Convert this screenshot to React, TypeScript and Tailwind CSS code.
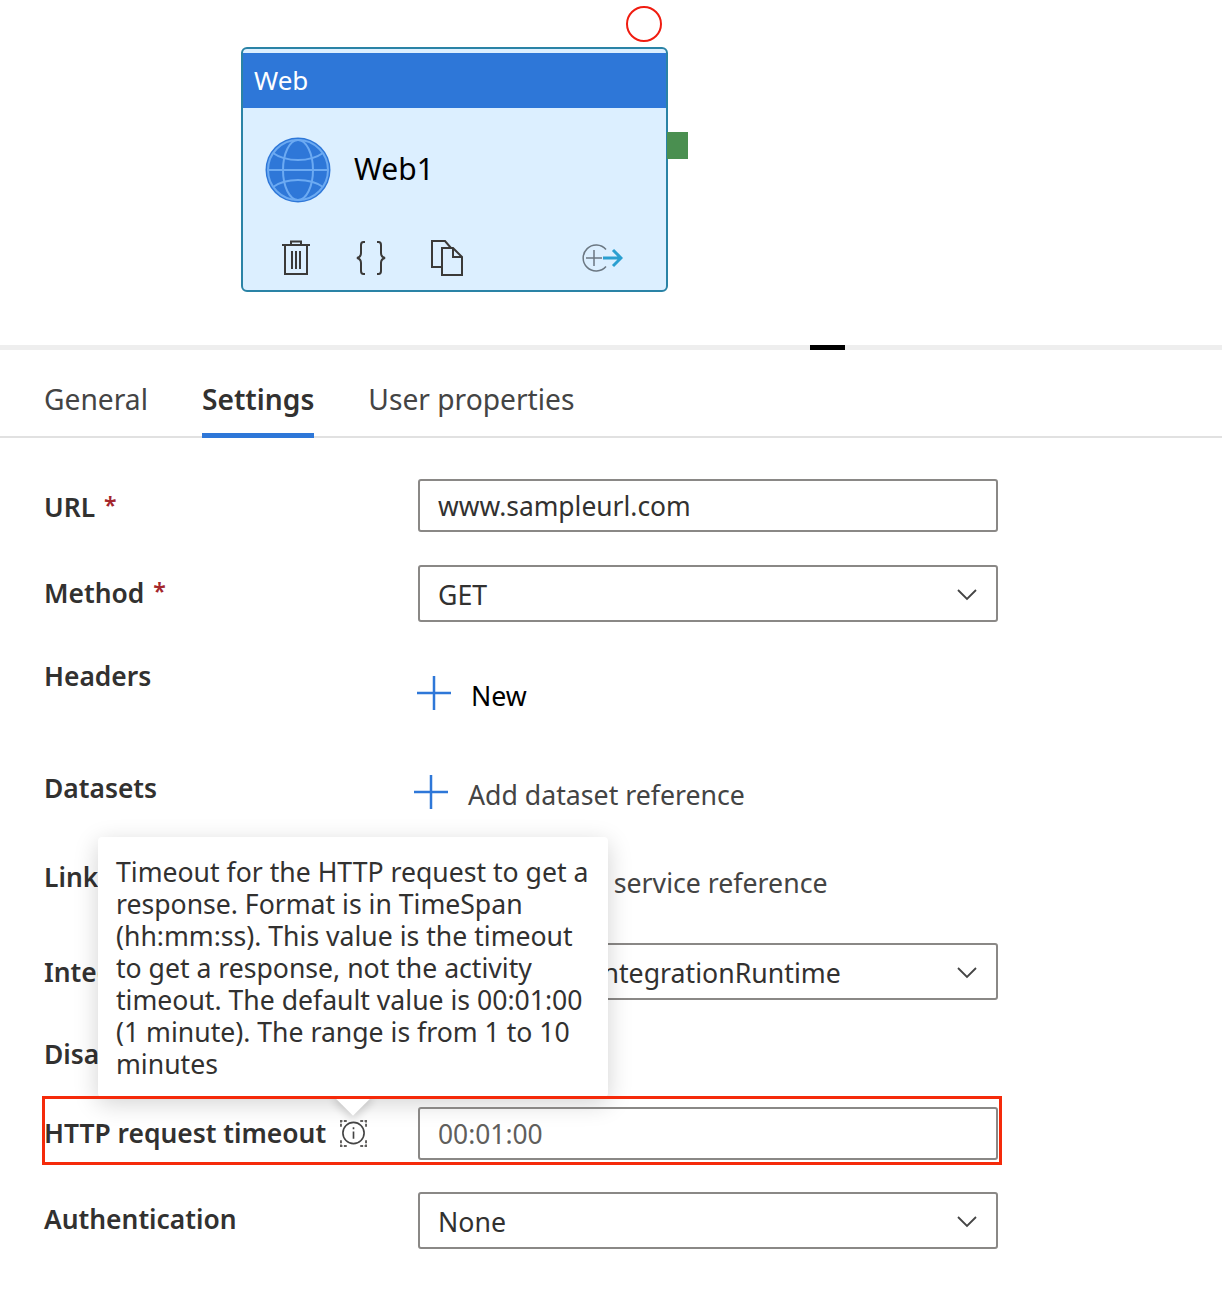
import React from 'react';

const font = { fontFamily: '"Noto Sans", "Open Sans", sans-serif' };

function GlobeIcon() {
  return (
    <svg width="68" height="68" viewBox="0 0 68 68" fill="none">
      <circle cx="34" cy="34" r="32.5" fill="#2e77d8" />
      <g stroke="#6caaf2" strokeWidth="2">
        <circle cx="34" cy="34" r="30" />
        <ellipse cx="34" cy="34" rx="15" ry="30" />
        <path d="M4 34h60" />
        <path d="M9 17c7 5 16 7 25 7s18-2 25-7" />
        <path d="M9 51c7-5 16-7 25-7s18 2 25 7" />
      </g>
    </svg>
  );
}

function TrashIcon() {
  return (
    <svg width="30" height="36" viewBox="0 0 30 36" fill="none" stroke="#3b3a39" strokeWidth="2">
      <path d="M1 5h28" />
      <path d="M10 5V1.500h10V5" />
      <path d="M4 5v29h22V5" />
      <path d="M11 11v18M15 11v18M19 11v18" />
    </svg>
  );
}

function BracesIcon() {
  return (
    <svg width="32" height="36" viewBox="0 0 32 36" fill="none" stroke="#3b3a39" strokeWidth="2">
      <path d="M10 2H8.500C6.500 2 6 3.500 6 5v8c0 3-2 4.500-4 5 2 .5 4 2 4 5v8c0 1.500.5 3 2.500 3H10" />
      <path d="M22 2h1.500C25.500 2 26 3.500 26 5v8c0 3 2 4.500 4 5-2 .5-4 2-4 5v8c0 1.500-.5 3-2.500 3H22" />
    </svg>
  );
}

function CopyIcon() {
  return (
    <svg width="32" height="36" viewBox="0 0 32 36" fill="none" stroke="#3b3a39" strokeWidth="2">
      <path d="M11 27H1V1h13l6 7" />
      <path d="M11 8h11l9 9v18H11z" />
      <path d="M22 8v9h9" />
    </svg>
  );
}

function AddOutputIcon() {
  return (
    <svg width="44" height="30" viewBox="0 0 44 30" fill="none">
      <path d="M27 6.500A13 13 0 1 0 27 23.500" stroke="#6b7782" strokeWidth="1.500" />
      <path d="M7 15h16M15 7v16" stroke="#6b7782" strokeWidth="1.500" />
      <path d="M24 15h18M34 7l8 8-8 8" stroke="#2a9fd0" strokeWidth="3" />
    </svg>
  );
}

function PlusIcon() {
  return (
    <svg className="mb-[6px]" width="34" height="34" viewBox="0 0 34 34" fill="none" stroke="#2e77d8" strokeWidth="2.500">
      <path d="M0 17h34M17 0v34" />
    </svg>
  );
}

function InfoIcon() {
  return (
    <svg width="27" height="27" viewBox="0 0 28 28" fill="none">
      <path d="M1 7V1h6M21 1h6v6M27 21v6h-6M7 27H1v-6" stroke="#605e5c" strokeWidth="2" strokeDasharray="3 1.500" />
      <circle cx="14" cy="13.500" r="11" stroke="#444" strokeWidth="1.700" />
      <path d="M14 12v7.500M14 7.500v2" stroke="#444" strokeWidth="1.700" />
    </svg>
  );
}

function Chevron() {
  return (
    <svg width="20" height="12" viewBox="0 0 20 12" fill="none" stroke="#444" strokeWidth="1.800">
      <path d="M1 1l9 9 9-9" />
    </svg>
  );
}

function Label({ children, required, className = '' }: { children: React.ReactNode; required?: boolean; className?: string }) {
  return (
    <div className={`w-[374px] shrink-0 text-[26.400px] leading-[36px] font-semibold text-[#323130] whitespace-nowrap ${className}`}>
      {children}
      {required && <span className="ml-[9px] text-[23px] align-[3px] text-[#a4262c]">*</span>}
    </div>
  );
}

function SelectBox({ value }: { value: string }) {
  return (
    <div className="w-[580px] h-[57px] border-2 border-[#8a8886] rounded-[3px] flex items-center justify-between pl-[18px] pr-[19px] pt-[3px] text-[26.700px] text-[#323130] bg-white">
      <span className="whitespace-nowrap">{value}</span>
      <Chevron />
    </div>
  );
}

export default function App() {
  return (
    <div className="relative w-[1222px] h-[1300px] bg-white overflow-hidden" style={font}>
      {/* Pipeline canvas */}
      <div className="h-[345px] pt-[47px] pl-[241px] relative">
        <div className="absolute left-[626px] top-[6px] w-[36px] h-[36px] rounded-full border-2 border-[#f01c10]" />
        <div className="relative w-[427px] h-[245px] border-2 border-[#2a83a6] rounded-[6px] bg-[#dcefff] pt-[4px] flex flex-col">
          <div className="h-[55px] bg-[#2e77d8] text-white text-[26px] pl-[11px] flex items-center">Web</div>
          <div className="flex items-center pl-[21px] pt-[28px] gap-[22px]">
            <GlobeIcon />
            <span className="text-[30px] text-black mb-[4px]">Web1</span>
          </div>
          <div className="flex items-center pl-[38px] pt-[36px]">
            <TrashIcon />
            <div className="ml-[44px]"><BracesIcon /></div>
            <div className="ml-[44px]"><CopyIcon /></div>
            <div className="ml-[116px]"><AddOutputIcon /></div>
          </div>
          <div className="absolute left-[424px] top-[83px] w-[21px] h-[27px] bg-[#4a8f50]" />
        </div>
      </div>

      {/* Splitter */}
      <div className="relative h-[5px] bg-[#eeeeee]">
        <div className="absolute left-[810px] top-0 w-[35px] h-[5px] bg-black" />
      </div>

      {/* Tabs */}
      <div className="h-[88px] border-b-2 border-[#e1e1e1] pl-[44px] flex gap-[54px] text-[28.200px] text-[#444]">
        <div className="h-[88px] flex items-center pt-[11px]">General</div>
        <div className="h-[88px] flex items-center pt-[16px] font-semibold text-[#323130] border-b-[5px] border-[#2e77d8]">Settings</div>
        <div className="h-[88px] flex items-center pt-[11px]">User properties</div>
      </div>

      {/* Form */}
      <div className="relative pl-[44px] pt-[41px]">
        <div className="flex items-center h-[53px]">
          <Label required>URL</Label>
          <div className="w-[580px] h-[53px] border-2 border-[#8a8886] rounded-[3px] flex items-center pl-[18px] pt-[3px] text-[26.400px] text-[#323130]">www.sampleurl.com</div>
        </div>

        <div className="flex items-center h-[57px] mt-[33px]">
          <Label required className="mb-[4px]">Method</Label>
          <SelectBox value="GET" />
        </div>

        <div className="flex h-[76px] mt-[36px]">
          <Label>Headers</Label>
          <div className="flex items-center h-[36px] mt-[20px] gap-[20px] text-[26.700px] text-black -ml-[1px]">
            <PlusIcon />
            <span>New</span>
          </div>
        </div>

        <div className="flex h-[62px] mt-[36px]">
          <Label>Datasets</Label>
          <div className="flex items-center h-[36px] mt-[7px] gap-[20px] text-[26.700px] text-[#444] -ml-[4px]">
            <PlusIcon />
            <span>Add dataset reference</span>
          </div>
        </div>

        <div className="flex h-[36px] mt-[27px]">
          <Label>Linked service *</Label>
          <div className="flex items-center h-[36px] mt-[6px] gap-[26px] text-[26.700px] text-[#444] -ml-[4px]">
            <PlusIcon />
            <span>Add linked service reference</span>
          </div>
        </div>

        <div className="flex items-center h-[57px] mt-[48px]">
          <Label>Integration runtime</Label>
          <SelectBox value="AutoResolveIntegrationRuntime" />
        </div>

        <div className="flex h-[36px] mt-[36px]">
          <Label>Disable certificate validation</Label>
        </div>

        <div className="flex items-center h-[69px] mt-[24px] -ml-[2px] w-[960px] border-[3px] border-[#f52a0a] relative z-10">
          <div className="w-[373px] shrink-0 flex items-center gap-[14px] mt-[6px] text-[26.400px] font-semibold text-[#323130] whitespace-nowrap">
            <span className="-ml-[1px]">HTTP request timeout</span>
            <InfoIcon />
          </div>
          <div className="w-[580px] h-[53px] mt-[5px] border-2 border-[#8a8886] rounded-[3px] flex items-center pl-[18px] pt-[3px] text-[26.400px] text-[#605e5c]">00:01:00</div>
        </div>

        <div className="flex items-center h-[57px] mt-[27px]">
          <Label className="mb-[4px]">Authentication</Label>
          <SelectBox value="None" />
        </div>

        {/* Tooltip for the timeout field */}
        <div className="absolute left-[98px] top-[399px] w-[510px] h-[260px] bg-white rounded-[4px] shadow-[0_6px_24px_rgba(0,0,0,0.18)] pl-[18px] pr-[12px] pt-[19px] text-[26.600px] leading-[32px] text-[#323130]">
          Timeout for the HTTP request to get a response. Format is in TimeSpan (hh:mm:ss). This value is the timeout to get a response, not the activity timeout. The default value is 00:01:00 (1 minute). The range is from 1 to 10 minutes
          <div className="absolute left-[215px] top-full w-[80px] h-[30px] overflow-hidden">
            <div className="mx-auto -mt-[15px] w-[28px] h-[28px] rotate-45 bg-white shadow-[3px_3px_8px_rgba(0,0,0,0.16)]" />
          </div>
        </div>
      </div>
    </div>
  );
}
